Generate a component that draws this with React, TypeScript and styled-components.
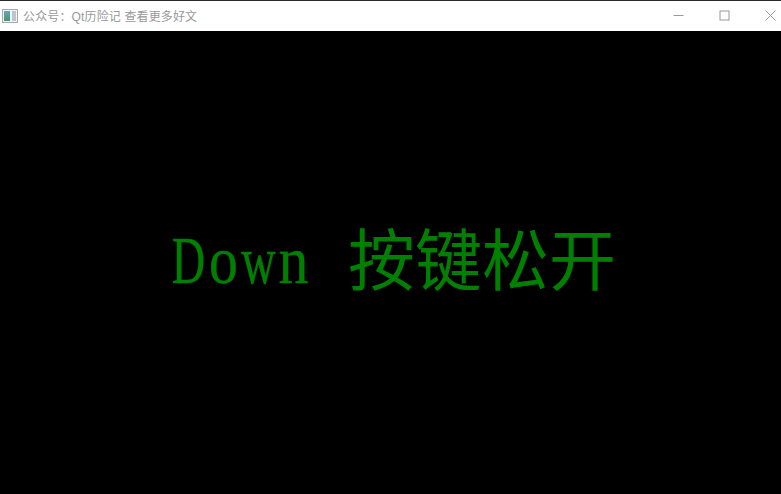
import styled, { createGlobalStyle } from 'styled-components';

const GlobalStyle = createGlobalStyle`
	html,
	body {
		margin: 0;
		padding: 0;
		background: #000;
	}
`;

const Window = styled.div`
	display: flex;
	flex-direction: column;
	width: 781px;
	height: 494px;
	overflow: hidden;
	background: #000;
`;

const TitleBar = styled.header`
	display: flex;
	align-items: center;
	flex: 0 0 31px;
	box-sizing: border-box;
	padding: 0 5px 1px 2px;
	background: #fff;
	border-top: 1px solid #2b2b2b;
`;

const AppIcon = styled.svg`
	flex: none;
	width: 16px;
	height: 14px;
	margin-right: 5px;
`;

const Title = styled.span`
	flex: 1;
	font-family: 'Liberation Sans', 'Noto Sans CJK SC', sans-serif;
	font-size: 12px;
	letter-spacing: 0.14px;
	color: #999;
	white-space: nowrap;
`;

const Controls = styled.div`
	display: flex;
	align-items: center;
	gap: 35px;
`;

const ControlIcon = styled.svg`
	display: block;
	width: 11px;
	height: 11px;
`;

const Content = styled.main`
	display: flex;
	flex: 1;
	align-items: center;
	padding: 0 0 14px 171px;
	color: #008000;
	white-space: nowrap;
`;

const Word = styled.span`
	display: flex;
	width: 177px;
	margin-top: 8px;
`;

const Letter = styled.span<{ $scale: number }>`
	display: flex;
	justify-content: center;
	width: 35px;
	font-family: 'Liberation Serif', serif;
	font-size: 68px;
	line-height: 1;
	-webkit-text-stroke: 0.4px #008000;
	transform: scaleX(${(props) => props.$scale});
`;

const Cjk = styled.span`
	font-family: 'Noto Sans CJK SC', sans-serif;
	font-size: 67px;
	font-weight: 400;
	line-height: 1;
`;

const letters = [
	{ char: 'D', scale: 0.68 },
	{ char: 'o', scale: 0.85 },
	{ char: 'w', scale: 0.7 },
	{ char: 'n', scale: 0.88 },
];

export default function App() {
	return (
		<>
			<GlobalStyle />
			<Window>
				<TitleBar>
					<AppIcon viewBox="0 0 16 14">
						<defs>
							<linearGradient id="iconPane" x1="0" y1="0" x2="0" y2="1">
								<stop offset="0" stopColor="#6f9fc4" />
								<stop offset="1" stopColor="#3f9a6a" />
							</linearGradient>
						</defs>
						<rect x="0.5" y="0.5" width="15" height="13" fill="#f2f4f5" stroke="#a3a9ac" />
						<rect x="2" y="2" width="6" height="10" fill="url(#iconPane)" />
						<rect x="10" y="2" width="4" height="10" fill="#b9c6cf" />
					</AppIcon>
					<Title>公众号：Qt历险记 查看更多好文</Title>
					<Controls>
						<ControlIcon viewBox="0 0 11 11">
							<path d="M0.5 5.5H10.5" stroke="#999" />
						</ControlIcon>
						<ControlIcon viewBox="0 0 11 11">
							<rect x="1" y="1" width="9" height="9" fill="none" stroke="#999" />
						</ControlIcon>
						<ControlIcon viewBox="0 0 11 11">
							<path d="M0.5 0.5L10.5 10.5M10.5 0.5L0.5 10.5" stroke="#999" />
						</ControlIcon>
					</Controls>
				</TitleBar>
				<Content>
					<Word>
						{letters.map((letter) => (
							<Letter key={letter.char} $scale={letter.scale}>
								{letter.char}
							</Letter>
						))}
					</Word>
					<Cjk>按键松开</Cjk>
				</Content>
			</Window>
		</>
	);
}
